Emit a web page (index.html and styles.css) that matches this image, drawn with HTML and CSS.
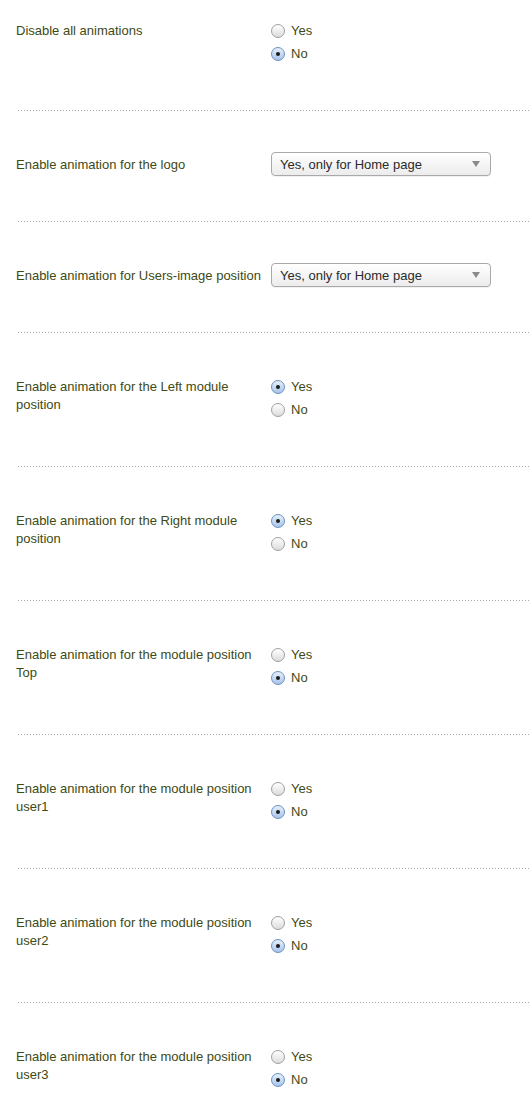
FILE: index.html
```html
<!DOCTYPE html>
<html>
<head>
<meta charset="utf-8">
<link rel="stylesheet" href="styles.css">
</head>
<body>
<div class="form">
  <div class="row first">
    <div class="label">Disable all animations</div>
    <div class="control">
      <div class="opt"><span class="radio"></span>Yes</div>
      <div class="opt"><span class="radio on"></span>No</div>
    </div>
  </div>
  <div class="row">
    <div class="label">Enable animation for the logo</div>
    <div class="control">
      <div class="select"><span>Yes, only for Home page</span><svg class="arrow" width="8" height="6" viewBox="0 0 8 6"><path d="M0 0H8L4 6Z" fill="#8a8a8a"/></svg></div>
    </div>
  </div>
  <div class="row">
    <div class="label">Enable animation for Users-image position</div>
    <div class="control">
      <div class="select"><span>Yes, only for Home page</span><svg class="arrow" width="8" height="6" viewBox="0 0 8 6"><path d="M0 0H8L4 6Z" fill="#8a8a8a"/></svg></div>
    </div>
  </div>
  <div class="row">
    <div class="label">Enable animation for the Left module position</div>
    <div class="control">
      <div class="opt"><span class="radio on"></span>Yes</div>
      <div class="opt"><span class="radio"></span>No</div>
    </div>
  </div>
  <div class="row">
    <div class="label">Enable animation for the Right module position</div>
    <div class="control">
      <div class="opt"><span class="radio on"></span>Yes</div>
      <div class="opt"><span class="radio"></span>No</div>
    </div>
  </div>
  <div class="row">
    <div class="label">Enable animation for the module position Top</div>
    <div class="control">
      <div class="opt"><span class="radio"></span>Yes</div>
      <div class="opt"><span class="radio on"></span>No</div>
    </div>
  </div>
  <div class="row">
    <div class="label">Enable animation for the module position user1</div>
    <div class="control">
      <div class="opt"><span class="radio"></span>Yes</div>
      <div class="opt"><span class="radio on"></span>No</div>
    </div>
  </div>
  <div class="row">
    <div class="label">Enable animation for the module position user2</div>
    <div class="control">
      <div class="opt"><span class="radio"></span>Yes</div>
      <div class="opt"><span class="radio on"></span>No</div>
    </div>
  </div>
  <div class="row last">
    <div class="label">Enable animation for the module position user3</div>
    <div class="control">
      <div class="opt"><span class="radio"></span>Yes</div>
      <div class="opt"><span class="radio on"></span>No</div>
    </div>
  </div>
</div>
</body>
</html>
```
FILE: styles.css
```css
html, body {
  margin: 0;
  padding: 0;
  background: #ffffff;
}
body {
  font-family: "Liberation Sans", Arial, sans-serif;
  font-size: 13px;
  color: #404a14;
}
.form {
  padding-left: 16px;
}
.row {
  display: grid;
  grid-template-columns: 255px 1fr;
  padding: 42px 0 45px 0;
  background-image: linear-gradient(to right, #a8a8a8 1px, transparent 1px);
  background-size: 3px 1px;
  background-repeat: repeat-x;
  background-position: 2px 100%;
  border-bottom: 1px solid transparent;
  background-origin: border-box;
}
.row.first {
  padding-top: 19px;
}
.row.last {
  background-image: none;
}
.label {
  line-height: 18px;
  padding-top: 2.5px;
  padding-right: 4px;
}
.control {
  display: flex;
  flex-direction: column;
}
.opt {
  display: flex;
  align-items: center;
  height: 23px;
  gap: 6px;
}
.radio {
  box-sizing: border-box;
  width: 14px;
  height: 14px;
  border-radius: 50%;
  border: 1px solid #a0a0a0;
  background: linear-gradient(#ffffff, #dcdcdc);
  display: flex;
  align-items: center;
  justify-content: center;
}
.radio.on {
  border-color: #6a90c2;
  background: linear-gradient(#e6f0fb, #a7c4e9);
}
.radio.on::after {
  content: "";
  width: 4px;
  height: 4px;
  border-radius: 50%;
  background: #1a1a1a;
}
.select {
  box-sizing: border-box;
  width: 220px;
  height: 24px;
  margin-top: -1px;
  border: 1px solid #a9a9a9;
  border-radius: 4px;
  background: linear-gradient(#ffffff, #ececec);
  display: flex;
  align-items: center;
  justify-content: space-between;
  padding: 0 10px 0 8px;
  color: #2b2b2b;
  box-shadow: 0 1px 0 rgba(0,0,0,0.05);
}
.arrow {
  display: block;
}
```
